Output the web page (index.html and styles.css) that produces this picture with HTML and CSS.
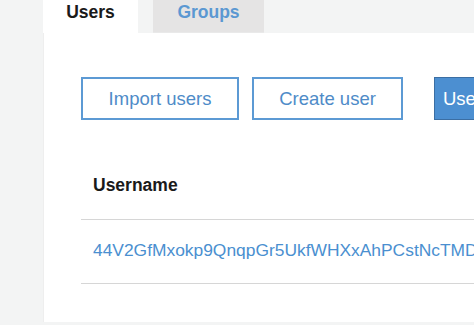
FILE: index.html
```html
<!DOCTYPE html>
<html>
<head>
<meta charset="utf-8">
<link rel="stylesheet" href="styles.css">
</head>
<body>
<div class="page">
  <div class="tabs">
    <div class="tab tab-active">Users</div>
    <div class="tab tab-inactive">Groups</div>
  </div>
  <div class="panel">
    <div class="toolbar">
      <button class="btn btn-outline btn-import">Import users</button>
      <button class="btn btn-outline btn-create">Create user</button>
      <button class="btn btn-primary">User actions</button>
    </div>
    <div class="table">
      <div class="th">Username</div>
      <div class="td"><a class="link" href="#">44V2GfMxokp9QnqpGr5UkfWHXxAhPCstNcTMDxyz</a></div>
    </div>
  </div>
</div>
</body>
</html>
```
FILE: styles.css
```css
html, body {
  margin: 0;
  padding: 0;
  width: 474px;
  height: 325px;
  overflow: hidden;
  background: #f3f4f4;
  font-family: "Liberation Sans", Arial, Helvetica, sans-serif;
}
.page {
  display: flex;
  flex-direction: column;
}
.tabs {
  display: flex;
  padding-left: 43px;
  height: 33px;
  gap: 15px;
}
.tab {
  font-weight: bold;
  font-size: 17.5px;
  line-height: 20px;
  padding-top: 2px;
  box-sizing: border-box;
  height: 33px;
  text-align: center;
}
.tab-active {
  width: 95px;
  background: #ffffff;
  color: #1a1a1a;
}
.tab-inactive {
  width: 111px;
  background: #e5e4e4;
  color: #5b98d2;
  border-bottom: 1px solid #e9e9e9;
}
.panel {
  margin-left: 43px;
  height: 289px;
  background: #ffffff;
  box-sizing: border-box;
  padding: 44px 0 0 37px;
  border-left: 1px solid #eeeeee;
  overflow: hidden;
}
.toolbar {
  display: flex;
  white-space: nowrap;
}
.btn {
  font-family: "Liberation Sans", Arial, Helvetica, sans-serif;
  font-size: 18.5px;
  height: 43px;
  box-sizing: border-box;
  padding: 0;
  flex-shrink: 0;
}
.btn-outline {
  background: #ffffff;
  border: 2px solid #5c9ad4;
  color: #4e8bc8;
}
.btn-import {
  width: 158px;
}
.btn-create {
  width: 151px;
  margin-left: 13px;
}
.btn-primary {
  margin-left: 31px;
  width: 140px;
  text-align: left;
  padding-left: 8px;
  background: #4c8fd1;
  border: 1px solid #3b6ea3;
  color: #ffffff;
}
.table {
  margin-top: 45px;
}
.th {
  font-weight: bold;
  font-size: 17.5px;
  line-height: 20px;
  color: #1a1a1a;
  padding: 10px 0 24px 12px;
  border-bottom: 1px solid #d6d6d6;
}
.td {
  font-size: 17.4px;
  line-height: 20px;
  padding: 20px 0 23px 12px;
  border-bottom: 1px solid #d6d6d6;
  white-space: nowrap;
}
.link {
  color: #4a8fd0;
  text-decoration: none;
}
```
